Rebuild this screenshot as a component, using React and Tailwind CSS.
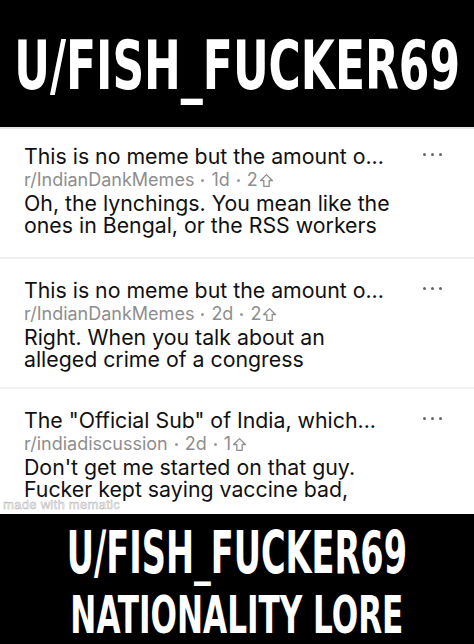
const COMMENTS = [
  {
    title: 'This is no meme but the amount o...',
    sub: 'r/IndianDankMemes',
    age: '1d',
    votes: '2',
    body: ['Oh, the lynchings. You mean like the', 'ones in Bengal, or the RSS workers'],
  },
  {
    title: 'This is no meme but the amount o...',
    sub: 'r/IndianDankMemes',
    age: '2d',
    votes: '2',
    body: ['Right. When you talk about an', 'alleged crime of a congress'],
  },
  {
    title: 'The "Official Sub" of India, which...',
    sub: 'r/indiadiscussion',
    age: '2d',
    votes: '1',
    body: ["Don't get me started on that guy.", 'Fucker kept saying vaccine bad,'],
  },
];

const HEAD_FONT = {
  fontFamily: '"DejaVu Sans Condensed", "DejaVu Sans", "Liberation Sans", sans-serif',
};
const BODY_FONT = { fontFamily: 'Inter, "Liberation Sans", sans-serif' };

function UpArrow() {
  return (
    <svg width="15" height="15" viewBox="0 0 14 14" className="ml-[1px]" aria-hidden="true">
      <path
        d="M7 1.5 L12.5 7 H9.5 V12.5 H4.5 V7 H1.5 Z"
        fill="none"
        stroke="#8e8e8e"
        strokeWidth="1.2"
        strokeLinejoin="round"
      />
    </svg>
  );
}

function Dot() {
  return <span className="mx-[7px] h-[3px] w-[3px] rounded-full bg-[#9a9a9a]" />;
}

function Comment({ title, sub, age, votes, body, first, last }) {
  return (
    <div
      className={
        (last ? 'h-[124px] ' : 'h-[128px] ') + (first ? 'pt-[14px] ' : 'pt-[18px] ') + 'pl-6 pr-4'
      }
    >
      <div className="flex items-start justify-between">
        <div className="text-[21.3px] leading-[26px] text-[#111]">{title}</div>
        <div className="mr-[16px] mt-[10px] flex gap-[5px]">
          <span className="h-[3px] w-[3px] rounded-full bg-[#666]" />
          <span className="h-[3px] w-[3px] rounded-full bg-[#666]" />
          <span className="h-[3px] w-[3px] rounded-full bg-[#666]" />
        </div>
      </div>
      <div className="flex items-center text-[18px] leading-[22px] text-[#8e8e8e]">
        <span>{sub}</span>
        <Dot />
        <span>{age}</span>
        <Dot />
        <span>{votes}</span>
        <UpArrow />
      </div>
      <div className="mt-[1px] text-[21.3px] leading-[22px] text-[#111]">
        {body.map((line) => (
          <div key={line}>{line}</div>
        ))}
      </div>
    </div>
  );
}

export default function App() {
  return (
    <div className="flex h-[644px] w-[474px] flex-col overflow-hidden bg-white" style={BODY_FONT}>
      <div className="flex h-[127px] items-center justify-center bg-black pt-[3px]">
        <div
          className="origin-center scale-x-[0.94] scale-y-[1.308] whitespace-nowrap text-[52px] font-bold leading-none text-white"
          style={HEAD_FONT}
        >
          U/FISH_FUCKER69
        </div>
      </div>
      <div className="h-[2px] bg-[#e6e6e6]" />

      <div className="relative flex-1">
        {COMMENTS.map((c, i) => (
          <div key={i}>
            <Comment {...c} first={i === 0} last={i === COMMENTS.length - 1} />
            {i < COMMENTS.length - 1 && <div className="h-[2px] bg-[#f1f1f1]" />}
          </div>
        ))}
        <div
          className="absolute bottom-[3px] left-[3px] text-[13px] leading-none tracking-[0.3px] text-white"
          style={{ WebkitTextStroke: '0.5px #b4b4b4', fontFamily: '"Liberation Sans", sans-serif' }}
        >
          made with mematic
        </div>
      </div>

      <div className="flex h-[130px] flex-col items-center bg-black pt-[14px] text-white" style={HEAD_FONT}>
        <div className="scale-x-[0.777] scale-y-[1.208] whitespace-nowrap text-[48px] font-bold leading-none">
          U/FISH_FUCKER69
        </div>
        <div className="mt-[18px] scale-x-[0.786] scale-y-[1.159] whitespace-nowrap text-[44px] font-bold leading-none">
          NATIONALITY LORE
        </div>
      </div>
    </div>
  );
}
